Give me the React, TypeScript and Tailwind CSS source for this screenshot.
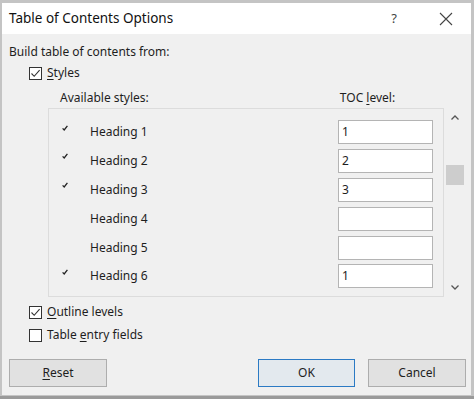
import React from "react";

const rows = [
  { name: "Heading 1", checked: true, level: "1" },
  { name: "Heading 2", checked: true, level: "2" },
  { name: "Heading 3", checked: true, level: "3" },
  { name: "Heading 4", checked: false, level: "" },
  { name: "Heading 5", checked: false, level: "" },
  { name: "Heading 6", checked: true, level: "1" },
];

function CheckBox({ checked }: { checked: boolean }) {
  return (
    <span className="w-[13px] h-[13px] border border-[#333] bg-white flex items-center justify-center shrink-0">
      {checked && (
        <svg width="11" height="11" viewBox="0 0 11 11">
          <path d="M1.5 5.5 L4.2 8.3 L9.6 2.2" fill="none" stroke="#333" strokeWidth="1.1" />
        </svg>
      )}
    </span>
  );
}

function Tick() {
  return (
    <svg width="6" height="6" viewBox="0 0 6 6" className="shrink-0">
      <path d="M0.6 3.4 L2.2 5 L5.4 0.8" fill="none" stroke="#222" strokeWidth="1.3" />
    </svg>
  );
}

export default function App() {
  return (
    <div className="w-[474px] h-[399px] bg-[#9a9a9a] overflow-hidden font-['Noto_Sans',sans-serif] text-[#1e1e1e]">
      <div className="h-[396px] bg-[#c4c4c4] pt-[3px] pl-[2px] pr-[3px] pb-[1px]">
        <div className="h-full bg-[#f0f0f0] flex flex-col">
          {/* Title bar */}
          <div className="h-[31px] bg-white flex items-center pl-[7px] shrink-0">
            <span className="text-[13.5px] text-[#111] leading-none">Table of Contents Options</span>
            <span className="ml-auto text-[13px] text-[#444] mr-[42px]">?</span>
            <svg width="14" height="14" viewBox="0 0 14 14" className="mr-[18px]">
              <path d="M1 1 L13 13 M13 1 L1 13" stroke="#444" strokeWidth="1.1" />
            </svg>
          </div>

          {/* Body */}
          <div className="flex flex-col pl-[7px] text-[12px] leading-[16px]">
            <div className="mt-[10px]">Build table of contents from:</div>

            <div className="flex items-center gap-[5px] mt-[5px] ml-[20px]">
              <CheckBox checked />
              <span>
                <span className="underline underline-offset-2">S</span>tyles
              </span>
            </div>

            <div className="flex mt-[9px] ml-[51px]">
              <span>Available styles:</span>
              <span className="ml-[191px]">
                TOC <span className="underline underline-offset-2">l</span>evel:
              </span>
            </div>

            <div className="flex mt-[2px] ml-[39px]">
              <div className="w-[396px] h-[189px] border border-[#dcdcdc] flex flex-col gap-[4.9px] pt-[11px] pl-[13px]">
                {rows.map((r) => (
                  <div key={r.name} className="flex items-center h-[24px]">
                    <span className="w-[6px] flex -mt-[9px]">{r.checked && <Tick />}</span>
                    <span className="ml-[22px] w-[248px]">{r.name}</span>
                    <span className="w-[95px] h-[24px] bg-white border border-[#b4b4b4] pl-[3px] flex items-center">
                      {r.level}
                    </span>
                  </div>
                ))}
              </div>
              <div className="w-[22px] flex flex-col items-center pt-[7px] pb-[7px]">
                <svg width="8" height="5" viewBox="0 0 8 5">
                  <path d="M0.5 4.5 L4 1 L7.5 4.5" fill="none" stroke="#555" strokeWidth="1.3" />
                </svg>
                <div className="w-[18px] h-[20px] bg-[#cdcdcd] mt-[45px]" />
                <svg width="8" height="5" viewBox="0 0 8 5" className="mt-auto">
                  <path d="M0.5 0.5 L4 4 L7.5 0.5" fill="none" stroke="#555" strokeWidth="1.3" />
                </svg>
              </div>
            </div>

            <div className="flex items-center gap-[5px] mt-[7px] ml-[20px]">
              <CheckBox checked />
              <span>
                <span className="underline underline-offset-2">O</span>utline levels
              </span>
            </div>
            <div className="flex items-center gap-[5px] mt-[7px] ml-[20px]">
              <CheckBox checked={false} />
              <span>
                Table <span className="underline underline-offset-2">e</span>ntry fields
              </span>
            </div>

            <div className="flex mt-[16px] pr-[5px]">
              <button className="w-[98px] h-[28px] bg-[#e1e1e1] border border-[#adadad] text-[12px]">
                <span className="underline underline-offset-2">R</span>eset
              </button>
              <button className="ml-auto w-[97px] h-[28px] bg-[#e3e9ee] border border-[#2b7ac4] text-[12px]">
                OK
              </button>
              <button className="ml-[13px] w-[98px] h-[28px] bg-[#e1e1e1] border border-[#adadad] text-[12px]">
                Cancel
              </button>
            </div>
          </div>
        </div>
      </div>
    </div>
  );
}
